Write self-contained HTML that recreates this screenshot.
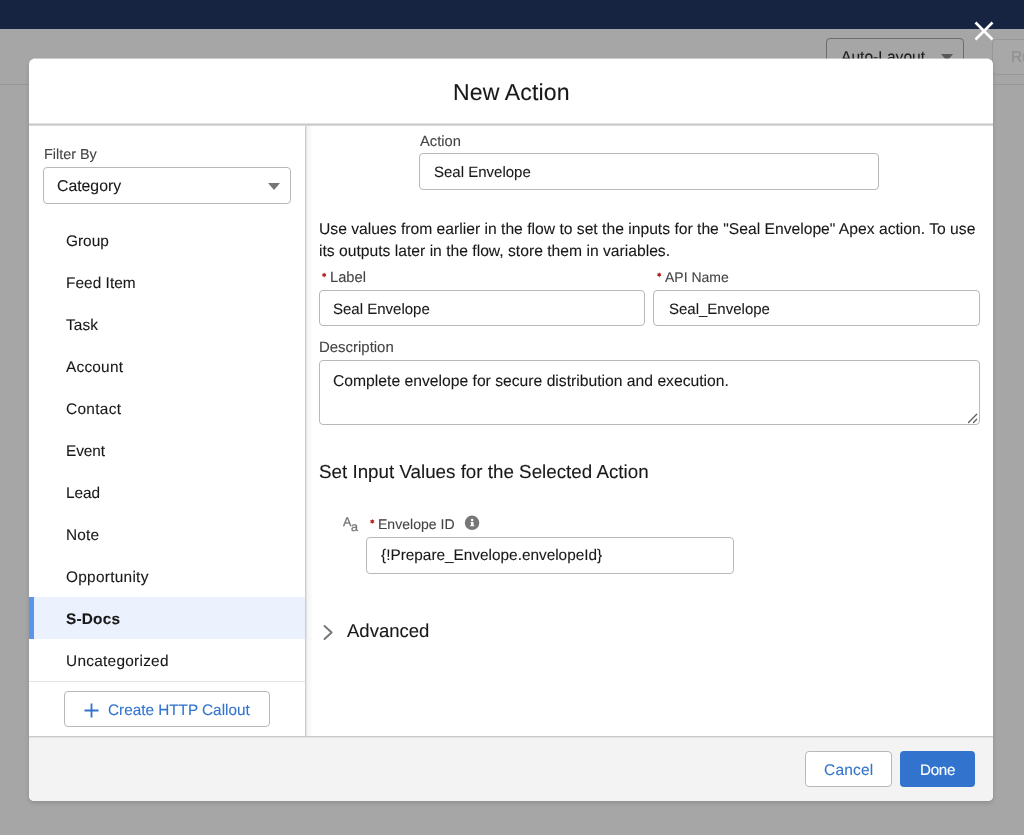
<!DOCTYPE html>
<html><head><meta charset="utf-8"><style>
html,body{margin:0;padding:0;}
body{width:1024px;height:835px;overflow:hidden;position:relative;background:#a6a6a6;font-family:"Liberation Sans",sans-serif;}
.t{position:absolute;white-space:nowrap;line-height:1;will-change:transform;text-rendering:geometricPrecision;-webkit-text-stroke:0.1px currentColor;}
.a{position:absolute;box-sizing:border-box;}
svg.a{overflow:visible}
</style></head><body>
<div class="a" style="left:0px;top:0px;width:1024px;height:29px;background:#162441"></div>
<div class="a" style="left:0px;top:84px;width:1024px;height:1px;background:#979797"></div>
<div class="a" style="left:826px;top:38px;width:138px;height:40px;border:1px solid #6c6c6c;border-radius:4px"></div>
<div class="t" style="left:841.00px;top:49.79px;font-size:15.60px;color:#1c1c1c;font-weight:normal;">Auto-Layout</div>
<div class="a" style="left:941px;top:53.5px;width:0;height:0;border-left:6px solid transparent;border-right:6px solid transparent;border-top:7px solid #575757"></div>
<div class="a" style="left:992px;top:39px;width:60px;height:36px;border:1px solid #979797;border-radius:4px;background:#a8a8a8"></div>
<div class="t" style="left:1011.00px;top:50.29px;font-size:15.60px;color:#8e8e8e;font-weight:normal;">Ru</div>
<svg class="a" style="left:973px;top:20px" width="22" height="22" viewBox="0 0 22 22"><path d="M2.5 2.5 L19.5 19.5 M19.5 2.5 L2.5 19.5" stroke="#fff" stroke-width="2.6" stroke-linecap="butt"/></svg>
<div class="a" style="left:33px;top:58px;width:956px;height:1px;background:rgba(255,255,255,0.45)"></div>
<div class="a" style="left:29px;top:58.5px;width:964px;height:742.3px;background:#fff;border-radius:5px;overflow:hidden;box-shadow:0 2px 4px rgba(0,0,0,0.15)">
<div class="a" style="left:0px;top:64.5px;width:964px;height:1px;background:#e2e2e2"></div>
<div class="a" style="left:0px;top:65.5px;width:964px;height:1px;background:#c9c9c9"></div>
<div class="a" style="left:0px;top:66.5px;width:964px;height:1px;background:#d9d9d9"></div>
<div class="a" style="left:0px;top:677.5px;width:964px;height:65px;background:#f3f3f3;border-top:1px solid #c9c9c9;box-shadow:inset 0 1px 0 #e2e2e2"></div>
<div class="a" style="left:276px;top:67.5px;width:1px;height:610px;background:#cdcdcd"></div>
<div class="a" style="left:277px;top:67.5px;width:1px;height:610px;background:#e4e4e4"></div>
<div class="a" style="left:278px;top:67.5px;width:5px;height:610px;background:linear-gradient(to right,#f3f3f3,#fdfdfd)"></div>
<div class="a" style="left:0px;top:538.5px;width:276px;height:42px;background:#ebf2fd"></div>
<div class="a" style="left:0px;top:538.5px;width:5px;height:42px;background:#5b94ef"></div>
<div class="a" style="left:0px;top:622.5px;width:276px;height:1px;background:#e3e3e3"></div>
</div>
<div class="t" style="left:453.03px;top:80.93px;font-size:23.06px;color:#181818;font-weight:normal;letter-spacing:0.150px;">New Action</div>
<div class="t" style="left:43.52px;top:147.91px;font-size:14.40px;color:#444;font-weight:normal;">Filter By</div>
<div class="a" style="left:43px;top:167px;width:248px;height:37px;border:1px solid #b8b8b8;border-radius:4px;background:#fff"></div>
<div class="t" style="left:57.12px;top:178.85px;font-size:15.80px;color:#181818;font-weight:normal;">Category</div>
<div class="a" style="left:268px;top:183px;width:0;height:0;border-left:6px solid transparent;border-right:6px solid transparent;border-top:7px solid #767676"></div>
<div class="t" style="left:66.42px;top:233.70px;font-size:15.40px;color:#181818;font-weight:normal;">Group</div>
<div class="t" style="left:66.42px;top:275.70px;font-size:15.40px;color:#181818;font-weight:normal;letter-spacing:0.050px;">Feed Item</div>
<div class="t" style="left:66.42px;top:317.70px;font-size:15.40px;color:#181818;font-weight:normal;letter-spacing:0.100px;">Task</div>
<div class="t" style="left:66.42px;top:359.70px;font-size:15.40px;color:#181818;font-weight:normal;letter-spacing:0.220px;">Account</div>
<div class="t" style="left:66.42px;top:401.70px;font-size:15.40px;color:#181818;font-weight:normal;letter-spacing:0.340px;">Contact</div>
<div class="t" style="left:66.42px;top:443.70px;font-size:15.40px;color:#181818;font-weight:normal;letter-spacing:-0.100px;">Event</div>
<div class="t" style="left:66.42px;top:485.70px;font-size:15.40px;color:#181818;font-weight:normal;letter-spacing:-0.100px;">Lead</div>
<div class="t" style="left:66.42px;top:527.70px;font-size:15.40px;color:#181818;font-weight:normal;letter-spacing:0.200px;">Note</div>
<div class="t" style="left:66.42px;top:569.70px;font-size:15.40px;color:#181818;font-weight:normal;letter-spacing:0.280px;">Opportunity</div>
<div class="t" style="left:66.42px;top:611.70px;font-size:15.40px;color:#181818;font-weight:bold;letter-spacing:0.200px;">S-Docs</div>
<div class="t" style="left:66.03px;top:653.56px;font-size:15.40px;color:#181818;font-weight:normal;letter-spacing:0.270px;">Uncategorized</div>
<div class="a" style="left:64px;top:691px;width:206px;height:36px;border:1px solid #b8b8b8;border-radius:4px;background:#fff"></div>
<svg class="a" style="left:84px;top:703px" width="15" height="15" viewBox="0 0 15 15"><path d="M7.5 0.5 V14.5 M0.5 7.5 H14.5" stroke="#3274cd" stroke-width="1.8"/></svg>
<div class="t" style="left:108.39px;top:702.68px;font-size:15.30px;color:#3274cd;font-weight:normal;">Create HTTP Callout</div>
<div class="t" style="left:420.15px;top:134.80px;font-size:14.70px;color:#444;font-weight:normal;">Action</div>
<div class="a" style="left:419px;top:153px;width:460px;height:37px;border:1px solid #b8b8b8;border-radius:4px"></div>
<div class="t" style="left:433.73px;top:164.76px;font-size:15.00px;color:#181818;font-weight:normal;">Seal Envelope</div>
<div class="t" style="left:318.97px;top:222.24px;font-size:15.68px;color:#181818;font-weight:normal;">Use values from earlier in the flow to set the inputs for the "Seal Envelope" Apex action. To use</div>
<div class="t" style="left:318.97px;top:244.44px;font-size:15.68px;color:#181818;font-weight:normal;">its outputs later in the flow, store them in variables.</div>
<div class="t" style="left:329.64px;top:271.06px;font-size:14.70px;color:#444;font-weight:normal;">Label</div>
<div class="t" style="left:665.45px;top:270.10px;font-size:14.00px;color:#444;font-weight:normal;">API Name</div>
<div class="a" style="left:319px;top:290px;width:326px;height:36px;border:1px solid #b8b8b8;border-radius:4px"></div>
<div class="a" style="left:653px;top:290px;width:327px;height:36px;border:1px solid #b8b8b8;border-radius:4px"></div>
<div class="t" style="left:333.41px;top:301.60px;font-size:15.00px;color:#181818;font-weight:normal;">Seal Envelope</div>
<div class="t" style="left:668.81px;top:301.60px;font-size:15.00px;color:#181818;font-weight:normal;">Seal_Envelope</div>
<div class="t" style="left:318.55px;top:341.49px;font-size:14.95px;color:#444;font-weight:normal;">Description</div>
<div class="a" style="left:319px;top:360px;width:661px;height:65px;border:1px solid #b8b8b8;border-radius:4px"></div>
<div class="t" style="left:332.96px;top:374.19px;font-size:15.70px;color:#181818;font-weight:normal;">Complete envelope for secure distribution and execution.</div>
<div class="t" style="left:318.76px;top:463.48px;font-size:18.80px;color:#181818;font-weight:normal;">Set Input Values for the Selected Action</div>
<div class="t" style="left:343.00px;top:516.13px;font-size:12.60px;color:#757575;font-weight:normal;-webkit-text-stroke:0.3px currentColor;">A</div>
<div class="t" style="left:350.90px;top:521.03px;font-size:12.60px;color:#757575;font-weight:normal;-webkit-text-stroke:0.3px currentColor;">a</div>
<div class="t" style="left:377.62px;top:516.99px;font-size:14.05px;color:#444;font-weight:normal;">Envelope ID</div>
<div class="a" style="left:366px;top:537px;width:368px;height:37px;border:1px solid #b8b8b8;border-radius:4px"></div>
<div class="t" style="left:381.20px;top:547.60px;font-size:15.36px;color:#181818;font-weight:normal;">{!Prepare_Envelope.envelopeId}</div>
<div class="t" style="left:347.10px;top:622.16px;font-size:18.50px;color:#181818;font-weight:normal;">Advanced</div>
<div class="a" style="left:805px;top:751px;width:87px;height:36px;border:1px solid #b8b8b8;border-radius:4px;background:#fff"></div>
<div class="t" style="left:824.43px;top:763.12px;font-size:15.50px;color:#3274cd;font-weight:normal;letter-spacing:0.200px;">Cancel</div>
<div class="a" style="left:900px;top:751px;width:75px;height:36px;border-radius:4px;background:#3274cd"></div>
<div class="t" style="left:919.73px;top:763.26px;font-size:15.20px;color:#fff;font-weight:normal;letter-spacing:-0.300px;">Done</div>
<svg class="a" style="left:0;top:0" width="1024" height="835"><polygon points="324.15,272.40 323.44,273.76 321.90,273.70 322.72,275.00 321.90,276.30 323.44,276.24 324.15,277.60 324.86,276.24 326.40,276.30 325.58,275.00 326.40,273.70 324.86,273.76" fill="#b3201d"/><polygon points="659.20,272.20 658.49,273.56 656.95,273.50 657.77,274.80 656.95,276.10 658.49,276.04 659.20,277.40 659.92,276.04 661.45,276.10 660.63,274.80 661.45,273.50 659.92,273.56" fill="#b3201d"/><polygon points="372.25,518.90 371.54,520.26 370.00,520.20 370.82,521.50 370.00,522.80 371.54,522.74 372.25,524.10 372.96,522.74 374.50,522.80 373.68,521.50 374.50,520.20 372.96,520.26" fill="#b3201d"/><path d="M968.5 422.5 L976.7 414.3 M973.5 422.5 L976.7 419.3" stroke="#5e5e5e" stroke-width="1.3" stroke-linecap="round"/><circle cx="472.05" cy="522.8" r="7.25" fill="#777"/><circle cx="472.1" cy="519.9" r="1.25" fill="#fff"/><path d="M470.6 522 H473.5 V525.1 H474.2 V526.3 H470.3 V525.1 H471.0 V523.1 H470.6 Z" fill="#fff"/><path d="M324.5 626 L331.6 632.5 L324.5 639" stroke="#767676" stroke-width="1.9" fill="none" stroke-linecap="round" stroke-linejoin="round"/></svg>
</body></html>
